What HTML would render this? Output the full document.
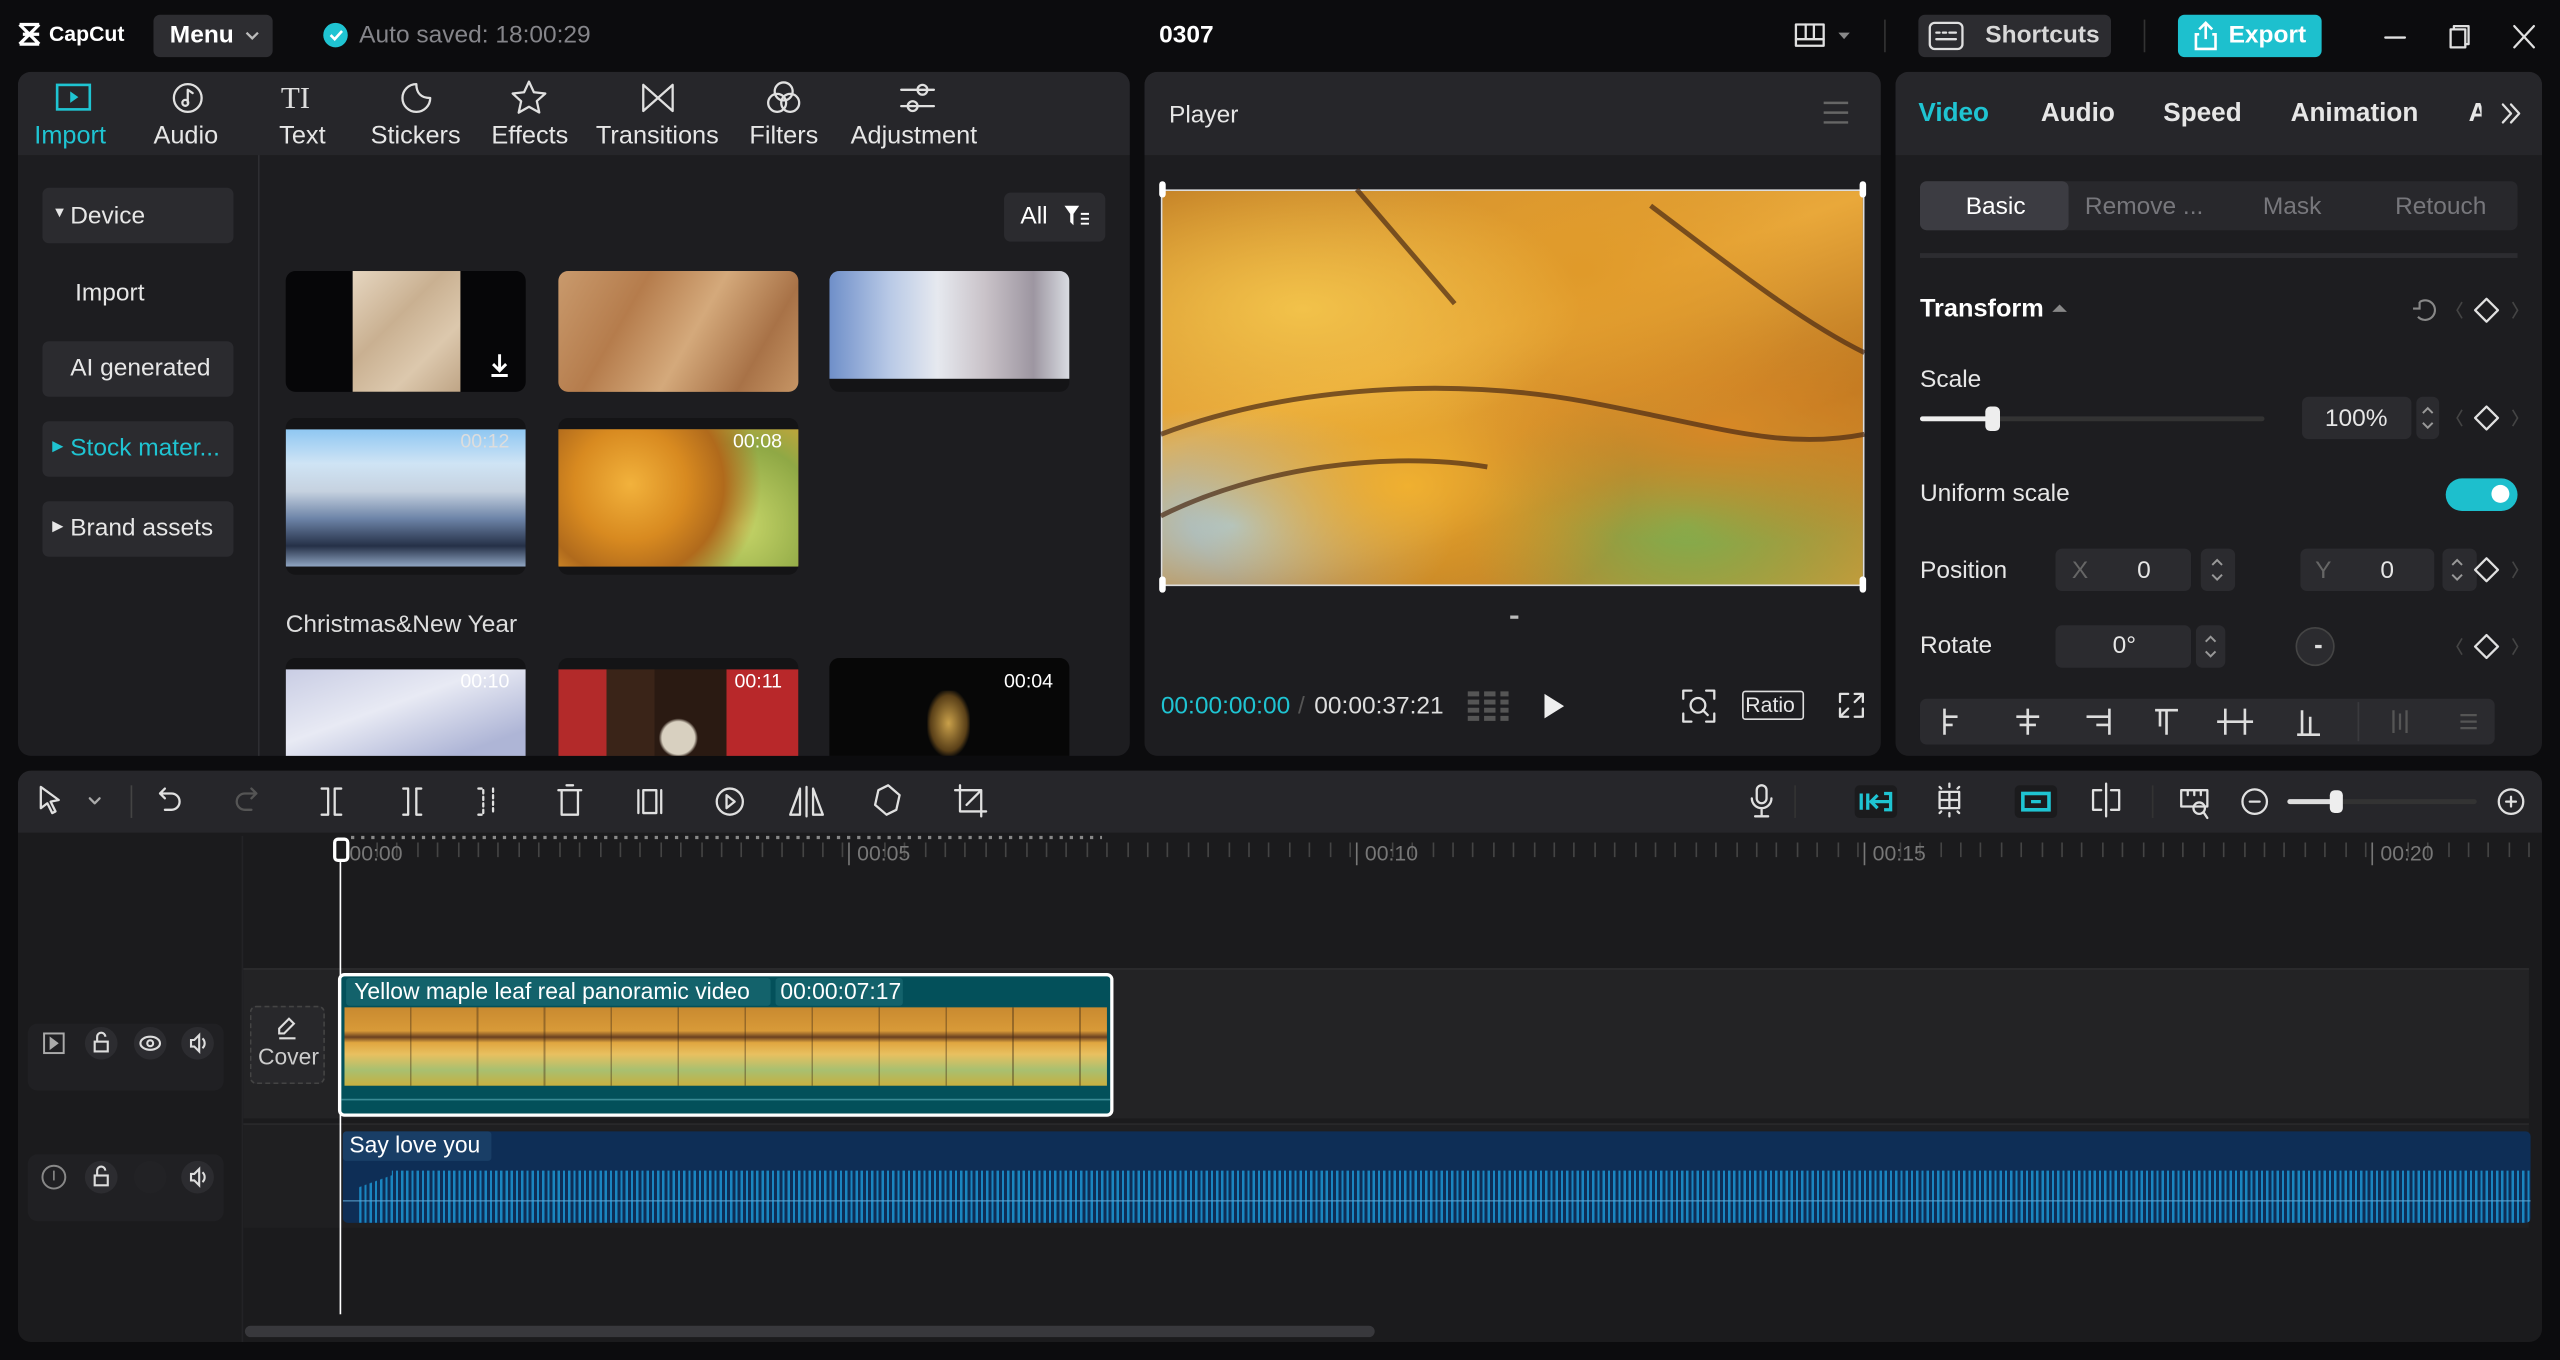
<!DOCTYPE html>
<html><head><meta charset="utf-8">
<style>
*{box-sizing:border-box;margin:0;padding:0}
html,body{width:2560px;height:1360px;overflow:hidden;background:#0c0c0e}
#r{position:absolute;left:0;top:0;width:1568px;height:833px;transform:scale(1.632653);transform-origin:0 0;font-family:"Liberation Sans",sans-serif;color:#e6e6e6;background:#0c0c0e}
.a{position:absolute}
.t{position:absolute;white-space:nowrap;line-height:1}
.panel{position:absolute;background:#1d1d20;border-radius:8px;overflow:hidden}
.hd{position:absolute;left:0;top:0;right:0;background:#26262a}
svg{position:absolute;overflow:visible}
.ic{fill:none;stroke:#e0e0e0;stroke-width:1.4;stroke-linecap:round;stroke-linejoin:round}
.btn{position:absolute;background:#2b2b2f;border-radius:4px}
.thumb{position:absolute;border-radius:6px;overflow:hidden;background:#111}
.dur{position:absolute;right:10px;top:7px;font-size:12px;color:#fff}
.g{color:#9a9a9e}
</style></head><body><div id="r">

<!-- top bar -->
<svg style="left:11px;top:14px" width="16" height="14" viewBox="0 0 16 14"><path d="M1 1h12M1 13h12M1 1l12 12M13 1L1 13M3 7h10" stroke="#fff" stroke-width="2" fill="none"/></svg>
<div class="t" style="left:30px;top:14px;font-size:13px;font-weight:bold;color:#fff">CapCut</div>
<div class="btn" style="left:94px;top:9px;width:73px;height:26px;background:#2d2d31"></div>
<div class="t" style="left:104px;top:14px;font-size:15px;font-weight:bold;color:#fff">Menu</div>
<svg style="left:150px;top:19px" width="9" height="6"><path d="M1 1l3.5 3.5L8 1" stroke="#bbb" stroke-width="1.4" fill="none"/></svg>
<div class="a" style="left:198px;top:14px;width:15px;height:15px;border-radius:50%;background:#1fc4d2"></div>
<svg style="left:201px;top:17px" width="10" height="9"><path d="M1.5 4.5l2.5 2.5 4.5-5" stroke="#fff" stroke-width="1.6" fill="none"/></svg>
<div class="t g" style="left:220px;top:14px;font-size:15px;color:#85858a">Auto saved: 18:00:29</div>
<div class="t" style="left:710px;top:14px;font-size:15px;font-weight:bold;color:#fff">0307</div>
<svg style="left:1099px;top:13px" width="38" height="17"><rect x="1" y="2" width="17" height="13" class="ic"/><path d="M1 11h17M7 2v9M12 2v9" class="ic"/><path d="M27 7l3.5 4 3.5-4z" fill="#888"/></svg>
<div class="a" style="left:1154px;top:12px;width:1px;height:20px;background:#333"></div>
<div class="btn" style="left:1175px;top:9px;width:118px;height:26px;background:#2c2c30"></div>
<svg style="left:1181px;top:13px" width="22" height="18"><rect x="1" y="1" width="20" height="16" rx="3" class="ic"/><path d="M5 7h2M9 7h2M13 7h4M5 11h12" class="ic"/></svg>
<div class="t" style="left:1216px;top:14px;font-size:15px;font-weight:bold;color:#d8d8d8">Shortcuts</div>
<div class="a" style="left:1313px;top:12px;width:1px;height:20px;background:#333"></div>
<div class="a" style="left:1334px;top:9px;width:88px;height:26px;background:#1dc0ce;border-radius:4px"></div>
<svg style="left:1342px;top:12px" width="18" height="20"><path d="M9 2v10M5 6l4-4 4 4M5 9H3v9h12V9h-2" stroke="#fff" stroke-width="1.6" fill="none"/></svg>
<div class="t" style="left:1365px;top:14px;font-size:15px;font-weight:bold;color:#fff">Export</div>
<svg style="left:1460px;top:14px" width="95" height="17"><path d="M1 9h12" class="ic"/><rect x="41" y="4" width="9" height="11" class="ic"/><path d="M43 4V2h9v11h-2" class="ic"/><path d="M80 2l12 13M92 2L80 15" class="ic"/></svg>

<!-- LEFT PANEL -->
<div class="panel" style="left:11px;top:44px;width:681px;height:419px">
 <div class="hd" style="height:51px"></div>
 <div class="a" style="left:147px;top:51px;width:1px;height:368px;background:#2e2e32"></div>
</div>
<svg style="left:34px;top:51px" width="22" height="18"><rect x="1" y="1" width="20" height="15" stroke="#1fc4d2" stroke-width="1.6" fill="none"/><path d="M9 5l5 3.5L9 12z" fill="#1fc4d2"/></svg>
<div class="t" style="left:21px;top:76px;font-size:15.5px;color:#1fc4d2">Import</div>
<svg style="left:105px;top:50px" width="20" height="20"><circle cx="10" cy="10" r="8.5" class="ic"/><path d="M10 5v8M10 5l3 2" class="ic"/><circle cx="8.5" cy="13" r="1.8" class="ic"/></svg>
<div class="t" style="left:94px;top:76px;font-size:15.5px">Audio</div>
<div class="t" style="left:172px;top:51px;font-size:19px;font-family:'Liberation Serif',serif;color:#ddd">TI</div>
<div class="t" style="left:171px;top:76px;font-size:15.5px">Text</div>
<svg style="left:245px;top:50px" width="20" height="20"><path d="M10 1.5a8.5 8.5 0 1 0 8.5 8.5C13 10 10 7 10 1.5z" class="ic"/></svg>
<div class="t" style="left:227px;top:76px;font-size:15.5px">Stickers</div>
<svg style="left:313px;top:49px" width="22" height="22"><path d="M11 1l3 6.5 7 .8-5.2 4.6 1.5 7L11 16.4 4.7 20l1.5-7L1 8.3l7-.8z" class="ic"/></svg>
<div class="t" style="left:301px;top:76px;font-size:15.5px">Effects</div>
<svg style="left:393px;top:51px" width="20" height="18"><path d="M1 1v16L19 1v16L1 1z" class="ic"/></svg>
<div class="t" style="left:365px;top:76px;font-size:15.5px">Transitions</div>
<svg style="left:469px;top:49px" width="22" height="22"><circle cx="11" cy="7" r="5.5" class="ic"/><circle cx="7" cy="14" r="5.5" class="ic"/><circle cx="15" cy="14" r="5.5" class="ic"/></svg>
<div class="t" style="left:459px;top:76px;font-size:15.5px">Filters</div>
<svg style="left:551px;top:50px" width="22" height="20"><path d="M1 5h20M1 15h20" class="ic"/><circle cx="14" cy="5" r="3" fill="#26262a" class="ic"/><circle cx="8" cy="15" r="3" fill="#26262a" class="ic"/></svg>
<div class="t" style="left:521px;top:76px;font-size:15.5px">Adjustment</div>

<div class="btn" style="left:26px;top:115px;width:117px;height:34px"></div>
<div class="t" style="left:32px;top:126px;font-size:9px">▼</div>
<div class="t" style="left:43px;top:125px;font-size:15px">Device</div>
<div class="t" style="left:46px;top:172px;font-size:15px">Import</div>
<div class="btn" style="left:26px;top:209px;width:117px;height:34px"></div>
<div class="t" style="left:43px;top:218px;font-size:15px">AI generated</div>
<div class="btn" style="left:26px;top:258px;width:117px;height:34px"></div>
<div class="t" style="left:32px;top:269px;font-size:9px;color:#1fc4d2">▶</div>
<div class="t" style="left:43px;top:267px;font-size:15px;color:#1fc4d2">Stock mater...</div>
<div class="btn" style="left:26px;top:307px;width:117px;height:34px"></div>
<div class="t" style="left:32px;top:318px;font-size:9px">▶</div>
<div class="t" style="left:43px;top:316px;font-size:15px">Brand assets</div>

<div class="btn" style="left:615px;top:118px;width:62px;height:30px"></div>
<div class="t" style="left:625px;top:125px;font-size:15px;color:#fff">All</div>
<svg style="left:651px;top:125px" width="17" height="14"><path d="M1 1h9L6.5 6v7L4.5 11V6z" fill="#fff"/><path d="M11 6h5M11 9h5M11 12h5" stroke="#fff" stroke-width="1.2"/></svg>

<!-- thumbs row1 -->
<div class="thumb" style="left:175px;top:166px;width:147px;height:74px;background:#060608">
 <div class="a" style="left:41px;top:0;width:66px;height:74px;background:linear-gradient(135deg,#e6d6c0,#c9b091 40%,#dcc8ad 70%,#bfa586)"></div>
 <svg style="left:124px;top:50px" width="14" height="16"><path d="M7 1v10M3 7l4 4 4-4M2 14h10" stroke="#fff" stroke-width="1.8" fill="none"/></svg>
</div>
<div class="thumb" style="left:342px;top:166px;width:147px;height:74px;background:linear-gradient(120deg,#c99a6d,#b57c4c 30%,#d4a97b 55%,#a87247 80%,#c69565)"></div>
<div class="thumb" style="left:508px;top:166px;width:147px;height:74px;background:#141416">
 <div class="a" style="left:0;top:0;width:147px;height:66px;background:linear-gradient(90deg,#6f8fc9,#b8c9e6 25%,#e6e9ef 45%,#c9c2c8 65%,#9d96a1 85%,#d9dce2)"></div>
</div>
<!-- row2 -->
<div class="thumb" style="left:175px;top:256px;width:147px;height:96px;background:#141416">
 <div class="a" style="left:0;top:7px;width:147px;height:84px;background:linear-gradient(180deg,#8fc7f2 0%,#cfe4f5 25%,#c6d2e0 45%,#6d84a8 65%,#253047 85%,#8fa5c2)"></div>
 <div class="dur" style="color:#ddd">00:12</div>
</div>
<div class="thumb" style="left:342px;top:256px;width:147px;height:96px;background:#141416">
 <div class="a" style="left:0;top:7px;width:147px;height:84px;background:radial-gradient(circle at 30% 40%,#f2b23c,#d88a20 30%,#b06a1c 50%,transparent 70%),radial-gradient(circle at 75% 70%,#c9d76a,#8fa845 40%,#e8a232 70%),#d79a32"></div>
 <div class="dur">00:08</div>
</div>
<div class="t" style="left:175px;top:375px;font-size:15px;color:#ddd">Christmas&amp;New Year</div>
<div class="thumb" style="left:175px;top:403px;width:147px;height:60px;border-radius:6px 6px 0 0;background:#141416">
 <div class="a" style="left:0;top:7px;width:147px;height:60px;background:linear-gradient(160deg,#c9cde4,#e8eaf4 40%,#aeb5d6 80%)"></div>
 <div class="dur">00:10</div>
</div>
<div class="thumb" style="left:342px;top:403px;width:147px;height:60px;border-radius:6px 6px 0 0;background:#141416">
 <div class="a" style="left:0;top:7px;width:147px;height:60px;background:radial-gradient(circle at 50% 70%,#d8d0c0 0 10px,transparent 12px),linear-gradient(90deg,#b32a2a 0 20%,#3a2418 20% 40%,#2a1a12 40% 70%,#b8282a 70%)"></div>
 <div class="dur">00:11</div>
</div>
<div class="thumb" style="left:508px;top:403px;width:147px;height:60px;border-radius:6px 6px 0 0;background:#070707">
 <div class="a" style="left:60px;top:20px;width:26px;height:40px;background:radial-gradient(#c9a04a,#5a4018 60%,transparent 75%)"></div>
 <div class="dur">00:04</div>
</div>

<!-- PLAYER -->
<div class="panel" style="left:701px;top:44px;width:451px;height:419px">
 <div class="hd" style="height:51px"></div>
</div>
<div class="t" style="left:716px;top:63px;font-size:15px">Player</div>
<svg style="left:1116px;top:62px" width="17" height="14"><path d="M1 1h15M1 7h15M1 13h15" stroke="#666" stroke-width="1.5"/></svg>
<div class="a" style="left:711px;top:116px;width:431px;height:243px;border:1px solid #ddd;background:
 radial-gradient(ellipse at 20% 30%,#f2c24a,transparent 35%),
 radial-gradient(ellipse at 60% 20%,#e09a2a,transparent 40%),
 radial-gradient(ellipse at 80% 60%,#d88826,transparent 35%),
 radial-gradient(ellipse at 35% 75%,#f0b030,transparent 35%),
 radial-gradient(ellipse at 75% 85%,#7fae4e,transparent 30%),
 radial-gradient(ellipse at 10% 85%,#a9c8d8,transparent 25%),
 linear-gradient(160deg,#c68428,#e9a83a 40%,#b8731f 70%,#c99a3a)"></div>
<svg style="left:711px;top:116px" width="431" height="243"><path d="M0 150C80 120 180 115 260 130S380 160 431 150M120 0l60 70M300 10c40 30 90 70 131 90M0 200c60-30 140-40 200-30" stroke="#4a2a14" stroke-width="3" fill="none" opacity=".7"/></svg>
<div class="a" style="left:710px;top:111px;width:4px;height:10px;background:#fff;border-radius:2px"></div>
<div class="a" style="left:1139px;top:111px;width:4px;height:10px;background:#fff;border-radius:2px"></div>
<div class="a" style="left:710px;top:353px;width:4px;height:10px;background:#fff;border-radius:2px"></div>
<div class="a" style="left:1139px;top:353px;width:4px;height:10px;background:#fff;border-radius:2px"></div>
<div class="a" style="left:925px;top:377px;width:5px;height:1.5px;background:#bbb"></div>
<div class="t" style="left:711px;top:425px;font-size:15px;color:#1fc4d2">00:00:00:00</div>
<div class="t" style="left:795px;top:425px;font-size:15px;color:#555">/</div>
<div class="t" style="left:805px;top:425px;font-size:15px;color:#ddd">00:00:37:21</div>
<svg style="left:898px;top:423px" width="27" height="20"><path d="M1 2h7M1 7h7M1 12h7M1 17h7M11 2h7M11 7h7M11 12h7M11 17h7M21 2h5M21 7h5M21 12h5M21 17h5" stroke="#555" stroke-width="3"/></svg>
<svg style="left:945px;top:424px" width="14" height="17"><path d="M1 1l12 7.5L1 16z" fill="#eee"/></svg>
<svg style="left:1030px;top:422px" width="21" height="21"><path d="M1 6V1h5M15 1h5v5M20 15v5h-5M6 20H1v-5" class="ic"/><circle cx="10" cy="10" r="4.5" class="ic"/><path d="M13 13l3 3" class="ic"/></svg>
<div class="a" style="left:1067px;top:423px;width:38px;height:18px;border:1.3px solid #ddd;border-radius:2px"></div>
<div class="t" style="left:1069px;top:425px;font-size:13px">Ratio</div>
<svg style="left:1126px;top:424px" width="16" height="16"><path d="M1 6V1h5M10 1h5v5M15 10v5h-5M6 15H1v-5M1 15l5-5M15 1l-5 5" class="ic"/></svg>

<!-- RIGHT PANEL -->
<div class="panel" style="left:1161px;top:44px;width:396px;height:419px">
 <div class="hd" style="height:51px"></div>
</div>
<div class="t" style="left:1175px;top:62px;font-size:16px;font-weight:bold;color:#1fc4d2">Video</div>
<div class="t" style="left:1250px;top:62px;font-size:16px;font-weight:bold">Audio</div>
<div class="t" style="left:1325px;top:62px;font-size:16px;font-weight:bold">Speed</div>
<div class="t" style="left:1403px;top:62px;font-size:16px;font-weight:bold">Animation</div>
<div class="t" style="left:1512px;top:62px;font-size:16px;font-weight:bold">A</div>
<div class="a" style="left:1520px;top:56px;width:6px;height:28px;background:#26262a"></div>
<svg style="left:1532px;top:63px" width="12" height="13"><path d="M1 1l5 5.5L1 12M6 1l5 5.5L6 12" class="ic"/></svg>
<div class="a" style="left:1176px;top:111px;width:366px;height:30px;background:#28282c;border-radius:4px"></div>
<div class="a" style="left:1176px;top:111px;width:91px;height:30px;background:#3c3c42;border-radius:4px"></div>
<div class="t" style="left:1204px;top:119px;font-size:15px;color:#fff">Basic</div>
<div class="t" style="left:1277px;top:119px;font-size:15px;color:#77777c">Remove ...</div>
<div class="t" style="left:1386px;top:119px;font-size:15px;color:#77777c">Mask</div>
<div class="t" style="left:1467px;top:119px;font-size:15px;color:#77777c">Retouch</div>
<div class="a" style="left:1176px;top:155px;width:366px;height:3px;background:#2c2c30"></div>
<div class="t" style="left:1176px;top:182px;font-size:15.5px;font-weight:bold;color:#fff">Transform</div>
<svg style="left:1257px;top:186px" width="9" height="6"><path d="M0 5l4.5-4.5L9 5z" fill="#888"/></svg>
<svg style="left:1477px;top:182px" width="15" height="16"><path d="M4 3a6 6 0 1 1-1 9M4 3v4H0" stroke="#888" stroke-width="1.3" fill="none" transform="translate(1,0)"/></svg>
<svg style="left:1504px;top:181px" width="40" height="18"><path d="M4 4L1 9l3 5" stroke="#444" fill="none"/><path d="M19 2l7 7-7 7-7-7z" class="ic"/><path d="M35 4l3 5-3 5" stroke="#444" fill="none"/></svg>
<div class="t" style="left:1176px;top:225px;font-size:15px">Scale</div>
<div class="a" style="left:1176px;top:255px;width:211px;height:3px;background:#333;border-radius:2px"></div>
<div class="a" style="left:1176px;top:255px;width:44px;height:3px;background:#eee;border-radius:2px"></div>
<div class="a" style="left:1216px;top:249px;width:9px;height:15px;background:#eee;border-radius:3px"></div>
<div class="btn" style="left:1410px;top:243px;width:67px;height:26px"></div>
<div class="t" style="left:1424px;top:249px;font-size:15px">100%</div>
<div class="btn" style="left:1480px;top:243px;width:14px;height:26px"></div>
<svg style="left:1482px;top:247px" width="10" height="18"><path d="M2 6l3-3 3 3M2 12l3 3 3-3" stroke="#999" stroke-width="1.2" fill="none"/></svg>
<svg style="left:1504px;top:247px" width="40" height="18"><path d="M4 4L1 9l3 5" stroke="#444" fill="none"/><path d="M19 2l7 7-7 7-7-7z" class="ic"/><path d="M35 4l3 5-3 5" stroke="#444" fill="none"/></svg>
<div class="t" style="left:1176px;top:295px;font-size:15px">Uniform scale</div>
<div class="a" style="left:1498px;top:293px;width:44px;height:20px;background:#1dbfcd;border-radius:10px"></div>
<div class="a" style="left:1526px;top:297px;width:11px;height:11px;background:#fff;border-radius:50%"></div>
<div class="t" style="left:1176px;top:342px;font-size:15px">Position</div>
<div class="btn" style="left:1259px;top:336px;width:83px;height:26px"></div>
<div class="t" style="left:1269px;top:342px;font-size:15px;color:#666">X</div>
<div class="t" style="left:1309px;top:342px;font-size:15px">0</div>
<div class="btn" style="left:1348px;top:336px;width:21px;height:26px"></div>
<svg style="left:1353px;top:340px" width="10" height="18"><path d="M2 6l3-3 3 3M2 12l3 3 3-3" stroke="#999" stroke-width="1.2" fill="none"/></svg>
<div class="btn" style="left:1409px;top:336px;width:82px;height:26px"></div>
<div class="t" style="left:1418px;top:342px;font-size:15px;color:#666">Y</div>
<div class="t" style="left:1458px;top:342px;font-size:15px">0</div>
<div class="btn" style="left:1496px;top:336px;width:21px;height:26px"></div>
<svg style="left:1500px;top:340px" width="10" height="18"><path d="M2 6l3-3 3 3M2 12l3 3 3-3" stroke="#999" stroke-width="1.2" fill="none"/></svg>
<svg style="left:1504px;top:340px" width="40" height="18"><path d="M19 2l7 7-7 7-7-7z" class="ic"/><path d="M35 4l3 5-3 5" stroke="#444" fill="none"/></svg>
<div class="t" style="left:1176px;top:388px;font-size:15px">Rotate</div>
<div class="btn" style="left:1259px;top:383px;width:83px;height:26px"></div>
<div class="t" style="left:1294px;top:388px;font-size:15px">0°</div>
<div class="btn" style="left:1345px;top:383px;width:18px;height:26px"></div>
<svg style="left:1349px;top:387px" width="10" height="18"><path d="M2 6l3-3 3 3M2 12l3 3 3-3" stroke="#999" stroke-width="1.2" fill="none"/></svg>
<div class="a" style="left:1406px;top:384px;width:24px;height:24px;border-radius:50%;background:#2b2b2f;border:1px solid #444"></div>
<div class="a" style="left:1418px;top:395px;width:4px;height:2px;background:#ddd"></div>
<svg style="left:1504px;top:387px" width="40" height="18"><path d="M4 4L1 9l3 5" stroke="#444" fill="none"/><path d="M19 2l7 7-7 7-7-7z" class="ic"/><path d="M35 4l3 5-3 5" stroke="#444" fill="none"/></svg>
<div class="a" style="left:1176px;top:428px;width:352px;height:28px;background:#2b2b2f;border-radius:4px"></div>
<svg style="left:1188px;top:433px" width="340" height="18"><g stroke="#ddd" stroke-width="1.6" fill="none">
<path d="M3 1v16M3 6h8M3 11h5"/><path d="M54 1v16M47 6h14M49 11h10"/><path d="M104 1v16M90 6h14M96 11h8"/><path d="M132 2h14M139 2v15M135 2v10"/><path d="M175 1v16M187 1v16M170 9h22"/><path d="M219 17h14M222 2v15M227 6v11"/></g>
<g stroke="#555" stroke-width="1.4"><path d="M278 2v14M282 4v10M286 2v14M319 5h10M319 9h10M319 13h10"/></g></svg>
<div class="a" style="left:1444px;top:430px;width:1px;height:24px;background:#3a3a3e"></div>

<!-- TIMELINE -->
<div class="panel" style="left:11px;top:472px;width:1546px;height:350px;background:#1b1b1d">
 <div class="hd" style="height:38px"></div>
 <div class="a" style="left:137px;top:40px;width:1px;height:310px;background:#232326"></div>
 <div class="a" style="left:138px;top:121px;right:8px;height:92px;background:#232325;border-top:1px solid #2c2c2e"></div>
 <div class="a" style="left:138px;top:216px;right:8px;height:64px;background:#1f1f21;border-top:1px solid #29292b"></div>
</div>
<!-- toolbar -->
<svg style="left:22px;top:480px" width="600" height="22"><g class="ic" stroke-width="1.5">
<path d="M3 2l11 8-5 1 3 6-2 1-3-6-4 3z"/><path d="M33 9l3 3 3-3" stroke="#aaa"/>
<path d="M76 6h7a5 5 0 0 1 0 10h-4M76 6l3-3M76 6l3 3"/>
<path d="M135 6h-7a5 5 0 0 0 0 10h4M135 6l-3-3M135 6l-3 3" stroke="#555"/>
<path d="M175 3h4v16h-4M187 3h-4v16h4"/><path d="M225 3h3v16h-3M233 3v16h3" /><path d="M233 3h3"/><path d="M271 3h3v16h-3M280 3v16" stroke-dasharray="2 2"/>
<path d="M320 4h14M322 4v15h10V4M325 1h4"/>
<path d="M369 4v14M372 4h8v14h-8zM383 4v14"/>
<circle cx="425" cy="11" r="8"/><path d="M423 7l5 4-5 4z"/>
<path d="M468 3v16h-6zM476 3v16h6zM472 2v18"/>
<path d="M516 4l6-3 7 6-2 9-6 3-7-6z"/>
<path d="M566 1v16h16M563 4h16v16"/><path d="M570 13l8-8"/></g></svg>
<div class="a" style="left:80px;top:481px;width:1px;height:20px;background:#444"></div>
<svg style="left:1070px;top:479px" width="480" height="24"><g class="ic" stroke-width="1.5">
<rect x="6" y="2" width="6" height="11" rx="3"/><path d="M3 10a6 6 0 0 0 12 0M9 16v5M5 21h8"/>
<path d="M118 6h12v10h-12zM118 11h12M124 6v10M124 1v2M124 19v2M118 3l1 1M130 3l-1 1M118 19l1-1M130 19l-1-1"/>
<path d="M217 5h-5v12h5M220 1v20M223 5h5v12h-5"/>
<path d="M266 5h16v10h-16zM270 5v3M274 5v3M278 5v3"/><circle cx="277" cy="16" r="3.5"/><path d="M280 19l2 3"/>
<circle cx="311" cy="12" r="7.5"/><path d="M308 12h6"/>
<circle cx="468" cy="12" r="7.5"/><path d="M465 12h6M468 9v6"/></g>
<rect x="66" y="2" width="26" height="20" rx="3" fill="#1b1b1d"/><path d="M70 7v10M74 7v10M76 12h12M80 8l-4 4 4 4M84 7h4v10h-4" stroke="#1fc4d2" stroke-width="2" fill="none"/>
<rect x="164" y="2" width="26" height="20" rx="3" fill="#1b1b1d"/><rect x="169" y="7" width="16" height="10" stroke="#1fc4d2" stroke-width="2.2" fill="none"/><path d="M174 12h6" stroke="#1fc4d2" stroke-width="2"/>
<rect x="331" y="10.5" width="116" height="3" rx="1.5" fill="#333"/><rect x="331" y="10.5" width="30" height="3" rx="1.5" fill="#ddd"/><rect x="357" y="5" width="8" height="14" rx="3" fill="#eee"/></svg>
<div class="a" style="left:1099px;top:481px;width:1px;height:20px;background:#333"></div>
<div class="a" style="left:1318px;top:481px;width:1px;height:20px;background:#333"></div>

<!-- ruler -->
<svg style="left:148px;top:510px" width="1410" height="24"><g stroke="#555" stroke-width="1">
<path id="tk" d="M0 0"/></g>
<g stroke="#444"><path d="M83 6v9M95 6v9M108 6v9M120 6v9M133 6v9M145 6v9M157 6v9M170 6v9M182 6v9M195 6v9M207 6v9M220 6v9M232 6v9M244 6v9M257 6v9M269 6v9M282 6v9M294 6v9M306 6v9M319 6v9M331 6v9M344 6v9M356 6v9M368 6v9M394 6v9M406 6v9M419 6v9M431 6v9M443 6v9M456 6v9M468 6v9M481 6v9M493 6v9M505 6v9M518 6v9M530 6v9M543 6v9M555 6v9M567 6v9M580 6v9M592 6v9M605 6v9M617 6v9M629 6v9M642 6v9M654 6v9M667 6v9M679 6v9M705 6v9M717 6v9M730 6v9M742 6v9M754 6v9M767 6v9M779 6v9M792 6v9M804 6v9M816 6v9M829 6v9M841 6v9M854 6v9M866 6v9M878 6v9M891 6v9M903 6v9M916 6v9M928 6v9M940 6v9M953 6v9M965 6v9M978 6v9M990 6v9M1016 6v9M1028 6v9M1041 6v9M1053 6v9M1065 6v9M1078 6v9M1090 6v9M1103 6v9M1115 6v9M1127 6v9M1140 6v9M1152 6v9M1165 6v9M1177 6v9M1189 6v9M1202 6v9M1214 6v9M1227 6v9M1239 6v9M1251 6v9M1264 6v9M1276 6v9M1289 6v9M1301 6v9M1327 6v9M1339 6v9M1352 6v9M1364 6v9M1376 6v9M1389 6v9M1401 6v9"/></g>
<g stroke="#777"><path d="M372 6v14M683 6v14M994 6v14M1305 6v14"/></g>
<path d="M67 3H527" stroke="#888" stroke-width="2" stroke-dasharray="2 4.2"/></svg>
<div class="t" style="left:214px;top:516px;font-size:13px;color:#777">00:00</div>
<div class="t" style="left:525px;top:516px;font-size:13px;color:#777">00:05</div>
<div class="t" style="left:836px;top:516px;font-size:13px;color:#777">00:10</div>
<div class="t" style="left:1147px;top:516px;font-size:13px;color:#777">00:15</div>
<div class="t" style="left:1458px;top:516px;font-size:13px;color:#777">00:20</div>

<!-- track headers -->
<div class="a" style="left:17px;top:627px;width:120px;height:41px;background:#202023;border-radius:6px"></div>
<div class="a" style="left:17px;top:707px;width:120px;height:41px;background:#202023;border-radius:6px"></div>
<svg style="left:22px;top:628px" width="115" height="120"><g stroke="#aaa" stroke-width="1.2" fill="none">
<rect x="5" y="5" width="12" height="12"/><path d="M9 8l4 3-4 3z" fill="#aaa"/></g>
<circle cx="40" cy="11" r="10" fill="#2c2c30"/><circle cx="70" cy="11" r="10" fill="#2c2c30"/><circle cx="99" cy="11" r="10" fill="#2c2c30"/>
<g stroke="#ddd" stroke-width="1.3" fill="none"><rect x="36" y="10" width="8" height="6"/><path d="M37.5 10V7a2.5 2.5 0 0 1 5 0"/>
<ellipse cx="70" cy="11" rx="6" ry="4"/><circle cx="70" cy="11" r="1.8"/><path d="M95 9h2l3-3v10l-3-3h-2zM102 8a4 4 0 0 1 0 6"/></g>
<g transform="translate(0,82)"><circle cx="11" cy="11" r="7" stroke="#888" stroke-width="1.2" fill="none"/><path d="M11 7v6" stroke="#888"/>
<circle cx="40" cy="11" r="10" fill="#2c2c30"/><circle cx="70" cy="11" r="10" fill="#222225"/><circle cx="99" cy="11" r="10" fill="#2c2c30"/>
<g stroke="#ddd" stroke-width="1.3" fill="none"><rect x="36" y="10" width="8" height="6"/><path d="M37.5 10V7a2.5 2.5 0 0 1 5 0"/><path d="M95 9h2l3-3v10l-3-3h-2zM102 8a4 4 0 0 1 0 6"/></g></g></svg>
<div class="a" style="left:153px;top:616px;width:46px;height:48px;border:1px dashed #444;border-radius:4px;background:#28282b"></div>
<svg style="left:169px;top:623px" width="14" height="14"><path d="M8 1l3 3-6 6H2V7zM2 13h10" stroke="#ddd" stroke-width="1.3" fill="none"/></svg>
<div class="t" style="left:158px;top:640px;font-size:14px;color:#ccc">Cover</div>

<!-- video clip -->
<div class="a" style="left:207px;top:596px;width:475px;height:88px;background:#03505a;border:2px solid #fff;border-radius:4px;overflow:hidden">
 <div class="a" style="left:2px;top:19px;width:467px;height:48px;background:
 repeating-linear-gradient(90deg,transparent 0 40px,rgba(60,40,20,.4) 40px 41px),
 linear-gradient(180deg,#c98a30 0%,#d89a38 30%,#6a4020 38%,#e0a640 45%,#e8c060 60%,#a8c070 80%,#c8b040 100%)"></div>
 <div class="a" style="left:0;top:75px;width:471px;height:1px;background:#3a8a94"></div>
</div>
<div class="a" style="left:212px;top:599px;width:260px;height:17px;background:#13626b;border-radius:2px"></div>
<div class="t" style="left:217px;top:600px;font-size:14px;color:#fff">Yellow maple leaf real panoramic video</div>
<div class="a" style="left:475px;top:599px;width:78px;height:17px;background:#13626b;border-radius:2px"></div>
<div class="t" style="left:478px;top:600px;font-size:14px;color:#fff">00:00:07:17</div>

<!-- audio clip -->
<div class="a" style="left:210px;top:693px;width:1340px;height:56px;background:#0e2e56;border-radius:3px;overflow:hidden">
 <div class="a" style="left:10px;top:24px;width:1330px;height:32px;background:repeating-linear-gradient(90deg,#1a86c0 0 1.4px,transparent 1.4px 3.2px)"></div>
 <div class="a" style="left:0;top:22px;width:30px;height:20px;background:linear-gradient(160deg,#0e2e56 50%,transparent 52%)"></div>
 <div class="a" style="left:0;top:42px;width:1340px;height:1px;background:#5fa8d6;opacity:.6"></div>
</div>
<div class="a" style="left:210px;top:693px;width:91px;height:18px;background:#193e66;border-radius:2px"></div>
<div class="t" style="left:214px;top:694px;font-size:14px;color:#fff">Say love you</div>

<!-- playhead -->
<div class="a" style="left:208px;top:520px;width:1.3px;height:285px;background:#fff"></div>
<div class="a" style="left:204px;top:513px;width:10px;height:15px;border:2px solid #fff;border-radius:3px;background:#1b1b1d"></div>

<!-- scrollbar -->
<div class="a" style="left:150px;top:812px;width:692px;height:7px;background:#38383c;border-radius:4px"></div>
</div></body></html>
